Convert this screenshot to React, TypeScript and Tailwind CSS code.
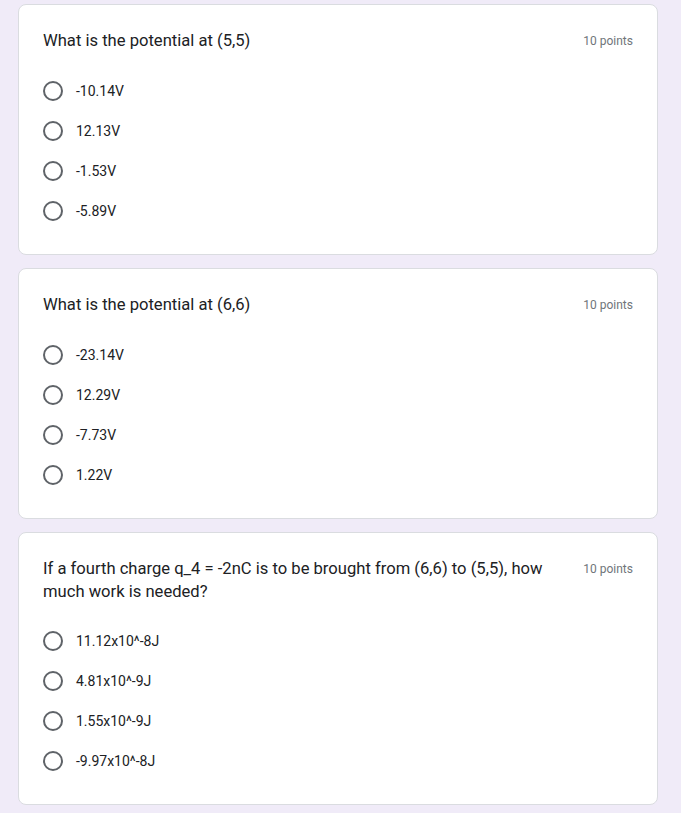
const questions = [
  {
    id: 1,
    title: 'What is the potential at (5,5)',
    options: ['-10.14V', '12.13V', '-1.53V', '-5.89V']
  },
  {
    id: 2,
    title: 'What is the potential at (6,6)',
    options: ['-23.14V', '12.29V', '-7.73V', '1.22V']
  },
  {
    id: 3,
    title: 'If a fourth charge q_4 = -2nC is to be brought from (6,6) to (5,5), how much work is needed?',
    options: ['11.12x10^-8J', '4.81x10^-9J', '1.55x10^-9J', '-9.97x10^-8J']
  }
]

function Radio() {
  return <div className="w-5 h-5 rounded-full border-2 border-[#5f6368] flex-shrink-0" />
}

export default function App() {
  return (
    <div
      className="min-h-[813px] bg-[#f0ebf8] pt-[4px] pl-[18px] pr-[23px] flex flex-col gap-[13px]"
      style={{ fontFamily: 'Roboto, "Liberation Sans", sans-serif' }}
    >
      {questions.map((q) => (
        <div
          key={q.id}
          className="bg-white border border-[#dadce0] rounded-lg pt-[24px] pb-[23px] px-[24px]"
        >
          <div className="flex items-start justify-between gap-6">
            <p className="text-[16.6px] leading-[23px] text-[#202124] max-w-[515px]">
              {q.title}
            </p>
            <span className="text-[12px] leading-[23px] text-[#70757a] whitespace-nowrap pt-[1px]">
              10 points
            </span>
          </div>
          <div className="mt-[18px] flex flex-col">
            {q.options.map((opt) => (
              <div key={opt} className="h-[40px] flex items-center gap-[13px]">
                <Radio />
                <span className="text-[14px] text-[#202124]">{opt}</span>
              </div>
            ))}
          </div>
        </div>
      ))}
    </div>
  )
}
